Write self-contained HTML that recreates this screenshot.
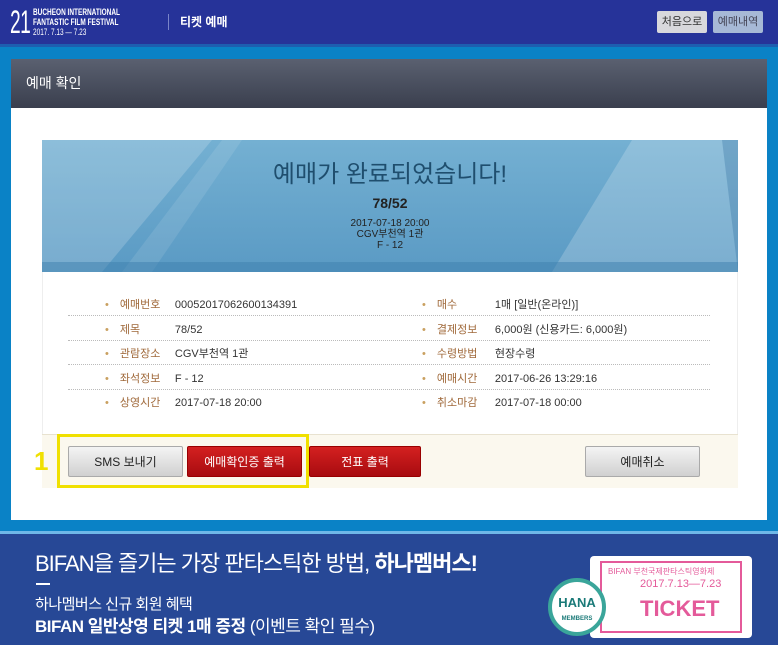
<!DOCTYPE html>
<html><head><meta charset="utf-8"><style>
*{margin:0;padding:0;box-sizing:border-box}
body{width:778px;height:645px;overflow:hidden;background:#0a82c6;font-family:"Liberation Sans","Noto Sans CJK KR",sans-serif;position:relative}
.a{position:absolute}
.hdr{left:0;top:0;width:778px;height:44px;background:#263399}
.btn{font-size:11px;height:22px;line-height:22px;text-align:center;border-radius:2px;color:#333}
.panel{left:11px;top:59px;width:756px;height:461px;background:#fff}
.ph{left:0;top:0;width:756px;height:49px;background:linear-gradient(#5a6070,#3a3f4e);color:#fff;font-size:14px;line-height:49px;padding-left:15px}
.row{font-size:11px;color:#333}
.lb{color:#a0693a}
.bul{color:#c9a060}
.dl{border-top:1px dotted #bbb;height:0}
.b{height:31px;line-height:31px;text-align:center;font-size:12px;border-radius:2px}
.g{background:linear-gradient(#f4f4f4,#d0d0d0);border:1px solid #aaa;color:#222}
.r{background:linear-gradient(#d42020,#a80c10);color:#fff;border:1px solid #900}
.foot{left:0;top:534px;width:778px;height:111px;background:#274896;color:#fff}
</style></head><body>
<div class="a hdr">
 <div class="a" style="left:10px;top:6px;font-size:32px;color:#fff;line-height:32px;transform:scaleX(.6);transform-origin:0 0;letter-spacing:-1px">21</div>
 <div class="a" style="left:33px;top:7px;font-size:9px;line-height:10px;color:#fff;font-weight:bold;transform:scaleX(.72);transform-origin:0 0;white-space:nowrap">BUCHEON INTERNATIONAL<br>FANTASTIC FILM FESTIVAL<br><span style="font-weight:normal">2017. 7.13 — 7.23</span></div>
 <div class="a" style="left:168px;top:14px;width:1px;height:16px;background:#7a85c8"></div>
 <div class="a" style="left:180px;top:13px;font-size:12px;color:#fff;font-weight:bold">티켓 예매</div>
 <div class="a btn" style="left:657px;top:11px;width:50px;background:#d8d8dc">처음으로</div>
 <div class="a btn" style="left:713px;top:11px;width:50px;background:#a7b9d6;color:#445">예매내역</div>
</div>
<div class="a" style="left:0;top:44px;width:778px;height:3px;background:#1d5eb0"></div>
<div class="a panel">
 <div class="a ph">예매 확인</div>
</div>
<div class="a" style="left:42px;top:140px;width:696px;height:132px;overflow:hidden;background:linear-gradient(#74b0d2,#5a9ac4)">
 <svg class="a" style="left:0;top:0" width="696" height="132"><polygon points="0,0 170,0 60,132 0,132" fill="#fff" opacity=".18"/><polygon points="180,0 200,0 110,132 80,132" fill="#fff" opacity=".1"/><polygon points="590,0 696,0 696,132 510,132" fill="#fff" opacity=".2"/><polygon points="680,0 696,0 696,132" fill="#2a6a9a" opacity=".3"/><rect y="122" width="696" height="10" fill="#3e7fae" opacity=".5"/></svg>
 <div class="a" style="left:0;width:696px;top:14px;text-align:center;font-size:24px;color:#1f4e6e">예매가 완료되었습니다!</div>
 <div class="a" style="left:0;width:696px;top:55px;text-align:center;font-size:14px;font-weight:bold;color:#222">78/52</div>
 <div class="a" style="left:0;width:696px;top:78px;text-align:center;font-size:10px;line-height:11px;color:#222">2017-07-18 20:00<br>CGV부천역 1관<br>F - 12</div>
</div>
<div class="a" style="left:42px;top:272px;width:696px;height:163px;border-left:1px solid #eee;border-right:1px solid #eee"></div>
<div class="a row" style="left:0;top:0">
 <div class="a" style="left:105px;top:296px;width:300px"><span class="bul">•</span> <span class="lb" style="display:inline-block;width:55px;margin-left:8px">예매번호</span>00052017062600134391</div>
 <div class="a" style="left:105px;top:321px;width:300px"><span class="bul">•</span> <span class="lb" style="display:inline-block;width:55px;margin-left:8px">제목</span>78/52</div>
 <div class="a" style="left:105px;top:345px;width:300px"><span class="bul">•</span> <span class="lb" style="display:inline-block;width:55px;margin-left:8px">관람장소</span>CGV부천역 1관</div>
 <div class="a" style="left:105px;top:370px;width:300px"><span class="bul">•</span> <span class="lb" style="display:inline-block;width:55px;margin-left:8px">좌석정보</span>F - 12</div>
 <div class="a" style="left:105px;top:394px;width:300px"><span class="bul">•</span> <span class="lb" style="display:inline-block;width:55px;margin-left:8px">상영시간</span>2017-07-18 20:00</div>
 <div class="a" style="left:422px;top:296px;width:300px"><span class="bul">•</span> <span class="lb" style="display:inline-block;width:58px;margin-left:8px">매수</span>1매 [일반(온라인)]</div>
 <div class="a" style="left:422px;top:321px;width:300px"><span class="bul">•</span> <span class="lb" style="display:inline-block;width:58px;margin-left:8px">결제정보</span>6,000원 (신용카드: 6,000원)</div>
 <div class="a" style="left:422px;top:345px;width:300px"><span class="bul">•</span> <span class="lb" style="display:inline-block;width:58px;margin-left:8px">수령방법</span>현장수령</div>
 <div class="a" style="left:422px;top:370px;width:300px"><span class="bul">•</span> <span class="lb" style="display:inline-block;width:58px;margin-left:8px">예매시간</span>2017-06-26 13:29:16</div>
 <div class="a" style="left:422px;top:394px;width:300px"><span class="bul">•</span> <span class="lb" style="display:inline-block;width:58px;margin-left:8px">취소마감</span>2017-07-18 00:00</div>
</div>
<div class="a dl" style="left:68px;top:315px;width:642px"></div>
<div class="a dl" style="left:68px;top:340px;width:642px"></div>
<div class="a dl" style="left:68px;top:364px;width:642px"></div>
<div class="a dl" style="left:68px;top:389px;width:642px"></div>
<div class="a" style="left:42px;top:434px;width:696px;height:54px;background:#fbf8ee;border-top:1px solid #e8e2d0"></div>
<div class="a b g" style="left:68px;top:446px;width:115px">SMS 보내기</div>
<div class="a b r" style="left:187px;top:446px;width:115px">예매확인증 출력</div>
<div class="a b r" style="left:309px;top:446px;width:112px">전표 출력</div>
<div class="a b g" style="left:585px;top:446px;width:115px">예매취소</div>
<div class="a" style="left:57px;top:434px;width:252px;height:54px;border:3px solid #f0e000"></div>
<div class="a" style="left:34px;top:446px;font-size:26px;font-weight:bold;color:#f0e000;line-height:30px">1</div>
<div class="a" style="left:0;top:531px;width:778px;height:3px;background:#6fb8e8"></div>
<div class="a foot">
 <div class="a" style="left:35px;top:12px;font-size:22px;letter-spacing:-1px;white-space:nowrap">BIFAN을 즐기는 가장 판타스틱한 방법, <b>하나멤버스!</b></div>
 <div class="a" style="left:36px;top:49px;width:14px;height:2px;background:#fff"></div>
 <div class="a" style="left:35px;top:59px;font-size:15px;letter-spacing:-.5px">하나멤버스 신규 회원 혜택</div>
 <div class="a" style="left:35px;top:78px;font-size:17px;letter-spacing:-.5px;white-space:nowrap"><b>BIFAN 일반상영 티켓 1매 증정</b> (이벤트 확인 필수)</div>
 <div class="a" style="left:590px;top:22px;width:162px;height:82px;background:#fff;border-radius:4px"></div>
 <div class="a" style="left:600px;top:27px;width:142px;height:72px;border:2px solid #e45a9a"></div>
 <div class="a" style="left:608px;top:32px;font-size:8px;color:#e45a9a">BIFAN 부천국제판타스틱영화제</div>
 <div class="a" style="left:640px;top:44px;font-size:11px;color:#e45a9a">2017.7.13—7.23</div>
 <div class="a" style="left:640px;top:62px;font-size:22px;font-weight:bold;color:#e45a9a">TICKET</div>
 <div class="a" style="left:548px;top:44px;width:58px;height:58px;border-radius:50%;background:#fff;border:4px solid #3aa59a;text-align:center;color:#1a7a78;font-weight:bold;font-size:13px;line-height:13px;padding-top:14px">HANA<br><span style="font-size:6px">MEMBERS</span></div>
</div>
</body></html>
